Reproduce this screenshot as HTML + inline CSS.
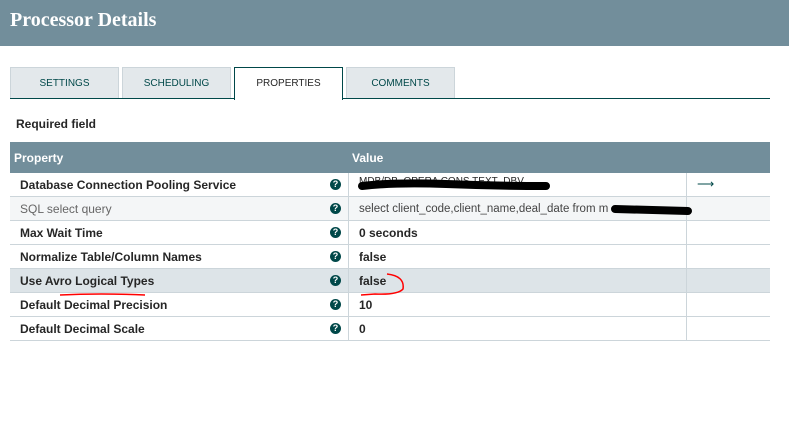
<!DOCTYPE html><html><head><style>
body{margin:0;width:789px;height:425px;background:#fff;font-family:"Liberation Sans",sans-serif;position:relative;overflow:hidden}
.hdr{position:absolute;left:0;top:0;width:789px;height:46px;background:#728e9b;color:#fff;font-family:"Liberation Serif",serif;font-weight:bold;font-size:20px;line-height:40px;padding-left:10px;box-sizing:border-box}
.tab{position:absolute;top:67px;height:31px;width:109px;background:#e3e8eb;border:1px solid #ccd5da;border-bottom:none;box-sizing:border-box;font-size:10px;color:#004849;text-align:center;line-height:32px}
.tab.act{background:#fff;border:1px solid #004849;border-bottom:none;color:#262626;height:33px}
.line{position:absolute;left:10px;top:98px;width:760px;height:1px;background:#004849}
.req{position:absolute;left:16px;top:117px;font-size:12px;font-weight:bold;color:#262626}
.th{position:absolute;left:10px;top:142px;width:760px;height:31px;background:#728e9b;color:#fff;font-weight:bold;font-size:12px;line-height:32px}
.row{position:absolute;left:10px;width:760px;height:24px;border-bottom:1px solid #ccd5da;box-sizing:border-box;font-size:12px;line-height:25px;color:#262626}
.row .p{position:absolute;left:10px;font-weight:bold}
.row .v{position:absolute;left:349px;font-weight:bold}
.row .q{position:absolute;left:320px;top:6px;width:11px;height:11px;border-radius:50%;background:#004849;color:#fff;font-size:9px;font-weight:bold;line-height:11px;text-align:center}
.d1,.d2{position:absolute;top:0;width:1px;height:23px;background:#ccd5da}
.d1{left:338px}.d2{left:676px}
</style></head><body>
<div class="hdr">Processor Details</div>
<div class="tab" style="left:10px">SETTINGS</div>
<div class="tab" style="left:122px">SCHEDULING</div>
<div class="tab" style="left:346px">COMMENTS</div>
<div class="line"></div>
<div class="tab act" style="left:234px">PROPERTIES</div>
<div class="req">Required field</div>
<div class="th"><span style="position:absolute;left:4px">Property</span><span style="position:absolute;left:342px">Value</span></div>
<div class="row" style="top:173px"><span class="p">Database Connection Pooling Service</span><span class="q">?</span><div class="d1"></div><div class="d2"></div><span class="v" style="font-weight:normal;font-size:10px;top:-4px">MDB/DB_OPERA  CONS  TEXT_DBV</span><svg style="position:absolute;left:346px;top:4px" width="200" height="16"><path d="M6 9 Q40 5 90 7 T190 9" stroke="#000" stroke-width="8" fill="none" stroke-linecap="round"/></svg><span style="position:absolute;left:687px;top:-1px;color:#004849">⟶</span></div>
<div class="row" style="top:197px;background:#f4f6f7"><span class="p" style="font-weight:normal;color:#666">SQL select query</span><span class="q">?</span><div class="d1"></div><div class="d2"></div><span class="v" style="font-weight:normal;color:#444;font-size:11.5px">select client_code,client_name,deal_date from m</span><svg style="position:absolute;left:600px;top:6px" width="84" height="14"><path d="M5 6 L78 8" stroke="#000" stroke-width="8" stroke-linecap="round"/></svg></div>
<div class="row" style="top:221px"><span class="p">Max Wait Time</span><span class="q">?</span><div class="d1"></div><div class="d2"></div><span class="v">0 seconds</span></div>
<div class="row" style="top:245px"><span class="p">Normalize Table/Column Names</span><span class="q">?</span><div class="d1"></div><div class="d2"></div><span class="v">false</span></div>
<div class="row" style="top:269px;background:#dde4e8"><span class="p">Use Avro Logical Types</span><span class="q">?</span><div class="d1"></div><div class="d2"></div><span class="v">false</span></div>
<div class="row" style="top:293px"><span class="p">Default Decimal Precision</span><span class="q">?</span><div class="d1"></div><div class="d2"></div><span class="v">10</span></div>
<div class="row" style="top:317px"><span class="p">Default Decimal Scale</span><span class="q">?</span><div class="d1"></div><div class="d2"></div><span class="v">0</span></div>
<svg style="position:absolute;left:0;top:0" width="789" height="425"><path d="M387 274 Q405 276 403 289 Q398 295 375 294 L361 295" stroke="red" stroke-width="1.5" fill="none"/><path d="M60 295 Q100 293 145 295" stroke="red" stroke-width="1.5" fill="none"/></svg>
</body></html>
